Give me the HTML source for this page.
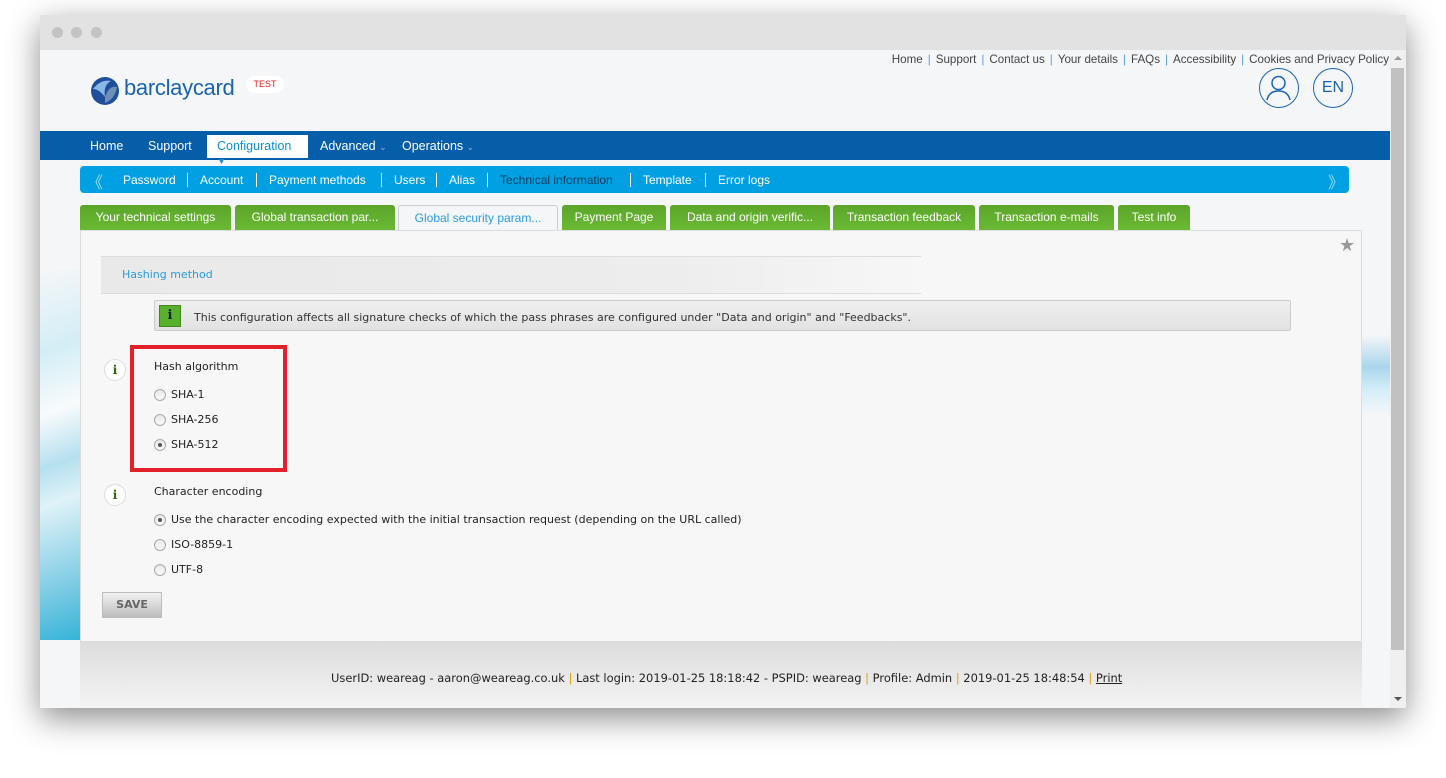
<!DOCTYPE html>
<html><head><style>
*{margin:0;padding:0;box-sizing:border-box}
body{width:1446px;height:778px;background:#fff;position:relative;overflow:hidden;font-family:"DejaVu Sans","Liberation Sans",sans-serif}
.a{position:absolute}
#win{left:40px;top:15px;width:1366px;height:693px;background:#f5f6f8;box-shadow:0 10px 30px rgba(0,0,0,.45);overflow:hidden}
#tb{left:0;top:0;width:1366px;height:35px;background:#e2e2e2}
.dot{width:11px;height:11px;border-radius:50%;background:#c3c3c3;top:12px}
.top{font-family:"Liberation Sans",sans-serif;font-size:11.6px;color:#444;top:38px;right:17px;white-space:nowrap}
.top span{color:#5aa0d8;margin:0 5px}
#nav{left:0;top:116px;width:1350px;height:29px;background:#075ea8;font-family:"Liberation Sans",sans-serif;font-size:12.5px;color:#fff}
#nav div{position:absolute;top:8px}
#sub{left:40px;top:151px;width:1269px;height:27px;background:#00a0e2;border-radius:4px;font-family:"Liberation Sans",sans-serif;font-size:12px;color:#fff}
#sub div{position:absolute;top:7px;white-space:nowrap}
.sep{width:1px;height:14px;background:#fff;top:7px!important}
.tab{top:190px;height:25px;background:linear-gradient(#5ca52a,#6ab934);color:#fff;font-family:"Liberation Sans",sans-serif;font-size:12px;text-align:center;line-height:25px;border-radius:3px 3px 0 0;white-space:nowrap}
#panel{left:40px;top:215px;width:1282px;height:411px;background:#f7f7f7;border:1px solid #ddd;border-bottom:none}
#foot{left:40px;top:626px;width:1282px;height:67px;background:linear-gradient(#dcdcdc,#f4f4f4)}
.t{font-size:11px;color:#222;white-space:nowrap}
.radio{width:12px;height:12px;border-radius:50%;border:1px solid #aaa;background:linear-gradient(#e8e8e8,#fbfbfb)}
.radio.on::after{content:"";position:absolute;left:3px;top:3px;width:4px;height:4px;border-radius:50%;background:#555}
.ib{width:22px;height:22px;border-radius:50%;background:#fff;border:1px solid #ddd;color:#2a6a00;font:bold 12px "DejaVu Serif",serif;text-align:center;line-height:20px}
</style></head><body>
<div id="win" class="a">
<div id="tb" class="a"></div>
<div class="a dot" style="left:12px"></div><div class="a dot" style="left:31px"></div><div class="a dot" style="left:51px"></div>
<div class="a" style="left:0;top:255px;width:40px;height:370px;background:linear-gradient(160deg,#f5f6f8 0%,#d3eef6 22%,#f8fbfc 38%,#b6e0ef 52%,#dff2f8 62%,#7ccbe4 85%,#35b3d8 100%)"></div>
<div class="a" style="left:1322px;top:320px;width:28px;height:80px;background:linear-gradient(#f5f6f8,#a9d6ec 40%,#d6eef8 70%,#f5f6f8)"></div>
<div class="a" style="left:1350px;top:35px;width:16px;height:658px;background:#f0f0f0"></div>
<div class="a" style="left:1351px;top:53px;width:13px;height:582px;background:#c1c1c1"></div>
<div class="a" style="left:1354px;top:41px;width:0;height:0;border:4px solid transparent;border-bottom-color:#999;border-top:0"></div>
<div class="a" style="left:1354px;top:682px;width:0;height:0;border:4px solid transparent;border-top-color:#555;border-bottom:0"></div>
<div class="a top">Home<span>|</span>Support<span>|</span>Contact us<span>|</span>Your details<span>|</span>FAQs<span>|</span>Accessibility<span>|</span>Cookies and Privacy Policy</div>
<svg class="a" style="left:49px;top:60px" width="32" height="32" viewBox="0 0 32 32"><circle cx="16" cy="16" r="14" fill="#1f4f9a"/><path d="M4 14 Q12 4 22 6 Q14 10 16 22 Q10 14 4 14Z" fill="#8ab8e6"/><path d="M16 22 Q20 10 28 12 Q26 24 16 28Z" fill="#6f8fb8"/></svg>
<div class="a" style="left:84px;top:60px;font-family:'Liberation Sans',sans-serif;font-size:22px;color:#1a63b0;letter-spacing:-.3px">barclaycard</div>
<div class="a" style="left:206px;top:61px;width:38px;height:17px;background:#fff;border-radius:9px;font-family:'Liberation Sans',sans-serif;font-size:9px;color:#e02020;text-align:center;line-height:17px">TEST</div>
<div class="a" style="left:1219px;top:53px;width:40px;height:40px;border-radius:50%;border:1.5px solid #1a63b0"><svg width="37" height="37" viewBox="0 0 37 37"><circle cx="18.5" cy="14" r="6.5" fill="none" stroke="#1a63b0" stroke-width="1.5"/><path d="M7 31 Q9 22 18.5 22 Q28 22 30 31" fill="none" stroke="#1a63b0" stroke-width="1.5"/></svg></div>
<div class="a" style="left:1273px;top:53px;width:40px;height:40px;border-radius:50%;border:1.5px solid #1a63b0;color:#1a63b0;font-family:'Liberation Sans',sans-serif;font-size:16px;text-align:center;line-height:37px">EN</div>
<div id="nav" class="a">
<div style="left:50px">Home</div>
<div style="left:108px">Support</div>
<div style="left:167px;top:4px;height:23px;width:101px;background:#fff;color:#0a8fd8;padding:4px 10px;">Configuration <span style="font-size:9px">▼</span></div>
<div style="left:280px">Advanced <span style="font-size:9px;color:#aac">⌄</span></div>
<div style="left:362px">Operations <span style="font-size:9px;color:#aac">⌄</span></div>
</div>
<div id="sub" class="a">
<div style="left:7px;top:3px;font-size:16px;color:#9fdcf6">《</div>
<div style="left:43px">Password</div><div class="sep" style="left:107px"></div>
<div style="left:120px">Account</div><div class="sep" style="left:176px"></div>
<div style="left:189px">Payment methods</div><div class="sep" style="left:301px"></div>
<div style="left:314px">Users</div><div class="sep" style="left:356px"></div>
<div style="left:369px">Alias</div><div class="sep" style="left:407px"></div>
<div style="left:420px;color:#073b5c">Technical information</div><div class="sep" style="left:550px"></div>
<div style="left:563px">Template</div><div class="sep" style="left:625px"></div>
<div style="left:638px">Error logs</div>
<div style="left:1248px;top:3px;font-size:16px;color:#9fdcf6">》</div>
</div>
<div class="a tab" style="left:40px;width:151px">Your technical settings</div>
<div class="a tab" style="left:195px;width:160px">Global transaction par...</div>
<div class="a tab" style="left:358px;width:160px;background:#f4f6f8;color:#2a9be0;border:1px solid #ccc;border-bottom:none">Global security param...</div>
<div class="a tab" style="left:522px;width:104px">Payment Page</div>
<div class="a tab" style="left:630px;width:160px">Data and origin verific...</div>
<div class="a tab" style="left:793px;width:142px">Transaction feedback</div>
<div class="a tab" style="left:939px;width:135px">Transaction e-mails</div>
<div class="a tab" style="left:1078px;width:72px">Test info</div>
<div id="panel" class="a"></div>
<div class="a" style="left:1299px;top:220px;color:#999;font-size:18px">★</div>
<div class="a" style="left:61px;top:241px;width:820px;height:38px;background:linear-gradient(90deg,#e9e9e9,#ededed 70%,#f7f7f7);border-top:1px solid #ddd;border-bottom:1px solid #ddd"></div>
<div class="a t" style="left:82px;top:253px;color:#2a9be0">Hashing method</div>
<div class="a" style="left:114px;top:285px;width:1137px;height:31px;background:linear-gradient(#efefef,#e2e2e2);border:1px solid #ccc;border-radius:2px"></div>
<div class="a" style="left:119px;top:290px;width:22px;height:22px;background:#59b02c;border:1px solid #3e8a18;color:#123;font:bold 13px 'DejaVu Serif',serif;text-align:center;line-height:20px">i</div>
<div class="a t" style="left:154px;top:296px;color:#333">This configuration affects all signature checks of which the pass phrases are configured under "Data and origin" and "Feedbacks".</div>
<div class="a" style="left:90px;top:330px;width:157px;height:127px;border:4px solid #e3202a"></div>
<div class="a ib" style="left:64px;top:344px">i</div>
<div class="a t" style="left:114px;top:345px">Hash algorithm</div>
<div class="a radio" style="left:114px;top:374px"></div><div class="a t" style="left:131px;top:373px">SHA-1</div>
<div class="a radio" style="left:114px;top:399px"></div><div class="a t" style="left:131px;top:398px">SHA-256</div>
<div class="a radio on" style="left:114px;top:424px"></div><div class="a t" style="left:131px;top:423px">SHA-512</div>
<div class="a ib" style="left:64px;top:469px">i</div>
<div class="a t" style="left:114px;top:470px">Character encoding</div>
<div class="a radio on" style="left:114px;top:499px"></div><div class="a t" style="left:131px;top:498px">Use the character encoding expected with the initial transaction request (depending on the URL called)</div>
<div class="a radio" style="left:114px;top:524px"></div><div class="a t" style="left:131px;top:523px">ISO-8859-1</div>
<div class="a radio" style="left:114px;top:549px"></div><div class="a t" style="left:131px;top:548px">UTF-8</div>
<div class="a" style="left:62px;top:577px;width:60px;height:26px;background:linear-gradient(#f2f2f2,#bdbdbd);border:1px solid #bbb;font:bold 11px 'DejaVu Sans',sans-serif;color:#666;text-align:center;line-height:24px">SAVE</div>
<div id="foot" class="a"></div>
<div class="a t" style="left:291px;top:656px;font-size:11.45px">UserID: weareag - aaron@weareag.co.uk <span style="color:#e0a000">|</span> Last login: 2019-01-25 18:18:42 - PSPID: weareag <span style="color:#e0a000">|</span> Profile: Admin <span style="color:#e0a000">|</span> 2019-01-25 18:48:54 <span style="color:#e0a000">|</span> <u>Print</u></div>
</div>
</body></html>
